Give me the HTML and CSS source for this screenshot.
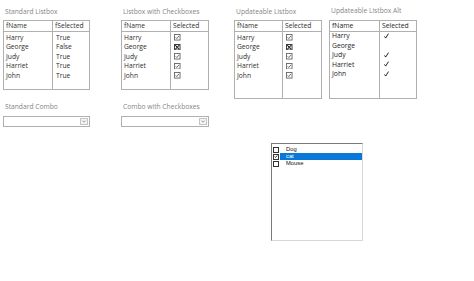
FILE: index.html
```html
<!DOCTYPE html>
<html>
<head>
<meta charset="utf-8">
<link rel="stylesheet" href="styles.css">
</head>
<body>
<div class="page">
  <div class="toprow">
    <div class="group g1">
      <div class="label">Standard Listbox</div>
      <div class="listbox short">
        <div class="col c1 w49">
          <div class="hd">fName</div>
          <div class="cell">Harry</div><div class="cell">George</div><div class="cell">Judy</div><div class="cell">Harriet</div><div class="cell">John</div>
        </div>
        <div class="col c2">
          <div class="hd">fSelected</div>
          <div class="cell">True</div><div class="cell">False</div><div class="cell">True</div><div class="cell">True</div><div class="cell">True</div>
        </div>
      </div>
    </div>
    <div class="group g2">
      <div class="label">Listbox with Checkboxes</div>
      <div class="listbox short">
        <div class="col c1 w49">
          <div class="hd">fName</div>
          <div class="cell">Harry</div><div class="cell">George</div><div class="cell">Judy</div><div class="cell">Harriet</div><div class="cell">John</div>
        </div>
        <div class="col c2">
          <div class="hd">Selected</div>
          <div class="cell"><svg class="cb" viewBox="0 0 7 7"><rect x="0.5" y="0.5" width="6" height="6" fill="none" stroke="#6a6a6a"/><path d="M1.8 3.6 L3 4.9 L5.3 2" fill="none" stroke="#555" stroke-width="0.9"/></svg></div>
          <div class="cell"><svg class="cb" viewBox="0 0 7 7"><rect x="0.5" y="0.5" width="6" height="6" fill="none" stroke="#333"/><path d="M1.3 1.3 L5.7 5.7 M5.7 1.3 L1.3 5.7" stroke="#222" stroke-width="1.1"/></svg></div>
          <div class="cell"><svg class="cb" viewBox="0 0 7 7"><rect x="0.5" y="0.5" width="6" height="6" fill="none" stroke="#6a6a6a"/><path d="M1.8 3.6 L3 4.9 L5.3 2" fill="none" stroke="#555" stroke-width="0.9"/></svg></div>
          <div class="cell"><svg class="cb" viewBox="0 0 7 7"><rect x="0.5" y="0.5" width="6" height="6" fill="none" stroke="#6a6a6a"/><path d="M1.8 3.6 L3 4.9 L5.3 2" fill="none" stroke="#555" stroke-width="0.9"/></svg></div>
          <div class="cell"><svg class="cb" viewBox="0 0 7 7"><rect x="0.5" y="0.5" width="6" height="6" fill="none" stroke="#6a6a6a"/><path d="M1.8 3.6 L3 4.9 L5.3 2" fill="none" stroke="#555" stroke-width="0.9"/></svg></div>
        </div>
      </div>
    </div>
    <div class="group g3">
      <div class="label">Updateable Listbox</div>
      <div class="listbox tall">
        <div class="col c1 w48">
          <div class="hd">fName</div>
          <div class="cell">Harry</div><div class="cell">George</div><div class="cell">Judy</div><div class="cell">Harriet</div><div class="cell">John</div>
        </div>
        <div class="col c2">
          <div class="hd">Selected</div>
          <div class="cell"><svg class="cb" viewBox="0 0 7 7"><rect x="0.5" y="0.5" width="6" height="6" fill="none" stroke="#6a6a6a"/><path d="M1.8 3.6 L3 4.9 L5.3 2" fill="none" stroke="#555" stroke-width="0.9"/></svg></div>
          <div class="cell"><svg class="cb" viewBox="0 0 7 7"><rect x="0.5" y="0.5" width="6" height="6" fill="none" stroke="#333"/><path d="M1.3 1.3 L5.7 5.7 M5.7 1.3 L1.3 5.7" stroke="#222" stroke-width="1.1"/></svg></div>
          <div class="cell"><svg class="cb" viewBox="0 0 7 7"><rect x="0.5" y="0.5" width="6" height="6" fill="none" stroke="#6a6a6a"/><path d="M1.8 3.6 L3 4.9 L5.3 2" fill="none" stroke="#555" stroke-width="0.9"/></svg></div>
          <div class="cell"><svg class="cb" viewBox="0 0 7 7"><rect x="0.5" y="0.5" width="6" height="6" fill="none" stroke="#6a6a6a"/><path d="M1.8 3.6 L3 4.9 L5.3 2" fill="none" stroke="#555" stroke-width="0.9"/></svg></div>
          <div class="cell"><svg class="cb" viewBox="0 0 7 7"><rect x="0.5" y="0.5" width="6" height="6" fill="none" stroke="#6a6a6a"/><path d="M1.8 3.6 L3 4.9 L5.3 2" fill="none" stroke="#555" stroke-width="0.9"/></svg></div>
        </div>
      </div>
    </div>
    <div class="group g4">
      <div class="label up">Updateable Listbox Alt</div>
      <div class="listbox tall alt">
        <div class="col c1 w50">
          <div class="hd">fName</div>
          <div class="cell">Harry</div><div class="cell">George</div><div class="cell">Judy</div><div class="cell">Harriet</div><div class="cell">John</div>
        </div>
        <div class="col c2">
          <div class="hd">Selected</div>
          <div class="cell"><svg class="tick" viewBox="0 0 6 7"><path d="M0.6 4 L2 6 L5.4 0.6" fill="none" stroke="#111" stroke-width="1.1"/></svg></div>
          <div class="cell"></div>
          <div class="cell"><svg class="tick" viewBox="0 0 6 7"><path d="M0.6 4 L2 6 L5.4 0.6" fill="none" stroke="#111" stroke-width="1.1"/></svg></div>
          <div class="cell"><svg class="tick" viewBox="0 0 6 7"><path d="M0.6 4 L2 6 L5.4 0.6" fill="none" stroke="#111" stroke-width="1.1"/></svg></div>
          <div class="cell"><svg class="tick" viewBox="0 0 6 7"><path d="M0.6 4 L2 6 L5.4 0.6" fill="none" stroke="#111" stroke-width="1.1"/></svg></div>
        </div>
      </div>
    </div>
  </div>

  <div class="comborow">
    <div class="group g1">
      <div class="label">Standard Combo</div>
      <div class="combo"><div class="field"></div><div class="btn"><svg viewBox="0 0 5 4" class="chev"><path d="M0.5 0.8 L2.5 3 L4.5 0.8" fill="none" stroke="#666" stroke-width="0.8"/></svg></div></div>
    </div>
    <div class="group g2">
      <div class="label">Combo with Checkboxes</div>
      <div class="combo"><div class="field"></div><div class="btn"><svg viewBox="0 0 5 4" class="chev"><path d="M0.5 0.8 L2.5 3 L4.5 0.8" fill="none" stroke="#666" stroke-width="0.8"/></svg></div></div>
    </div>
  </div>

  <div class="checklist">
    <div class="item"><span class="box"></span><span class="txt">Dog</span></div>
    <div class="item sel"><span class="box"><svg viewBox="0 0 6 6" class="bcheck"><path d="M1 3 L2.4 4.5 L5 1.3" fill="none" stroke="#000" stroke-width="1.1"/></svg></span><span class="txt">cat</span></div>
    <div class="item"><span class="box"></span><span class="txt">Mouse</span></div>
  </div>
</div>
</body>
</html>
```

FILE: styles.css
```css
html, body {
  margin: 0;
  padding: 0;
  background: #ffffff;
}

.page {
  font-family: "Open Sans", "Noto Sans", sans-serif;
  color: #2e2e2e;
}

.toprow {
  display: flex;
  align-items: flex-start;
  padding-top: 7px;
  height: 91px;
}

.group {
  display: flex;
  flex-direction: column;
}

.g1 { margin-left: 3px; width: 87px; }
.g2 { margin-left: 31px; width: 88px; }
.g3 { margin-left: 25px; width: 88px; }
.g4 { margin-left: 7px; width: 88px; }

.label {
  font-size: 6.7px;
  line-height: 10px;
  height: 10px;
  padding-left: 2px;
  margin-bottom: 3px;
  color: #858585;
  white-space: nowrap;
}

.label.up {
  margin-top: -1px;
  margin-bottom: 4px;
}

.listbox {
  display: flex;
  border: 1px solid #b0b0b0;
  box-sizing: border-box;
  font-size: 6.7px;
}

.listbox.short { height: 70px; }
.listbox.tall { height: 79px; }

.col {
  display: flex;
  flex-direction: column;
}

.c1 { border-right: 1px solid #b0b0b0; }
.c2 { flex: 1; }

.w49 { width: 48px; }
.w48 { width: 47px; }
.w50 { width: 49px; }

.hd {
  height: 10px;
  line-height: 10px;
  padding-left: 2px;
  border-bottom: 1px solid #b0b0b0;
  white-space: nowrap;
  overflow: hidden;
  margin-bottom: 0.5px;
}

.cell {
  height: 9.5px;
  line-height: 9.5px;
  padding-left: 2px;
  white-space: nowrap;
  display: flex;
  align-items: center;
}

.c2 .cell { padding-left: 3px; }

.alt { font-size: 6.8px; color: #1e1e1e; }
.alt .hd { margin-bottom: -1px; }

.cb {
  width: 6.5px;
  height: 6.5px;
  display: block;
}

.tick {
  width: 5px;
  height: 6px;
  display: block;
  margin-left: 1px;
}

.comborow {
  display: flex;
  align-items: flex-start;
  padding-top: 4px;
}

.comborow .label { margin-bottom: 4px; }

.comborow .g2 { margin-left: 31px; }

.combo {
  display: flex;
  height: 11px;
  border: 1px solid #b0b0b0;
  box-sizing: border-box;
  background: #fff;
}

.field { flex: 1; }

.btn {
  width: 8px;
  margin: 1px;
  border: 1px solid #c4c4c4;
  box-sizing: border-box;
  background: #f4f4f4;
  display: flex;
  align-items: center;
  justify-content: center;
}

.chev {
  width: 4px;
  height: 3px;
  display: block;
}

.checklist {
  margin-top: 16px;
  margin-left: 271px;
  width: 92px;
  height: 98px;
  box-sizing: border-box;
  border: 1px solid #7a7a7a;
  border-right-color: #d8d8d8;
  border-bottom-color: #d8d8d8;
  padding-top: 2px;
  font-family: "Liberation Sans", Arial, sans-serif;
  font-size: 5.8px;
  color: #111;
}

.item {
  display: flex;
  align-items: center;
  height: 7px;
}

.box {
  width: 6px;
  height: 6px;
  box-sizing: border-box;
  border: 1px solid #333;
  background: #fff;
  margin-left: 1px;
  margin-right: 1px;
  display: flex;
  align-items: center;
  justify-content: center;
}

.bcheck {
  width: 5px;
  height: 5px;
  display: block;
}

.txt {
  flex: 1;
  height: 7px;
  line-height: 7px;
  padding-left: 6px;
}

.item.sel .txt {
  background: #0a78d6;
  color: #fff;
}
```
